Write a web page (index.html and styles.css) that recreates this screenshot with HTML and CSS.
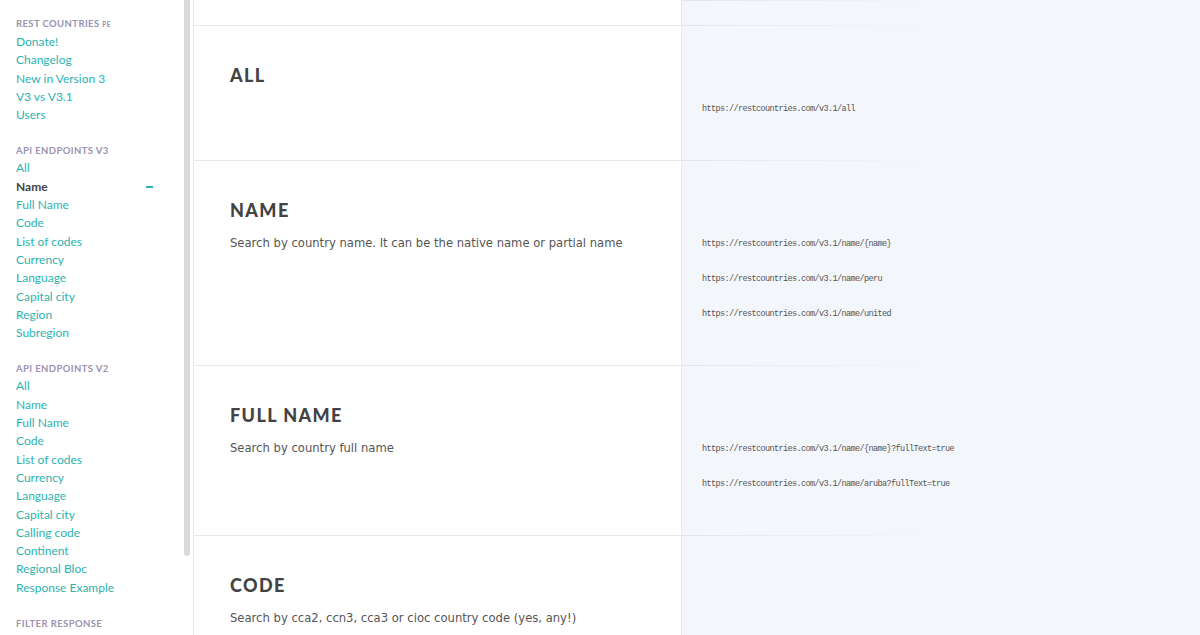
FILE: index.html
```html
<!DOCTYPE html>
<html lang="en">
<head>
  <meta charset="UTF-8">
  <meta name="viewport" content="width=device-width, initial-scale=1.0">
  <title>REST Countries</title>
  <link rel="stylesheet" href="styles.css">
</head>
<body>

<div class="page">
  <aside class="sidebar">
    <div class="sidebar-scroll">
      <div class="menu-group">
        <h4 class="menu-title">Rest Countries <small>pe</small></h4>
        <a href="#" class="menu-link">Donate!</a>
        <a href="#" class="menu-link">Changelog</a>
        <a href="#" class="menu-link">New in Version 3</a>
        <a href="#" class="menu-link">V3 vs V3.1</a>
        <a href="#" class="menu-link">Users</a>
      </div>

      <div class="menu-group">
        <h4 class="menu-title">API Endpoints V3</h4>
        <a href="#" class="menu-link">All</a>
        <a href="#" class="menu-link active">Name <span class="toggle"></span></a>
        <a href="#" class="menu-link">Full Name</a>
        <a href="#" class="menu-link">Code</a>
        <a href="#" class="menu-link">List of codes</a>
        <a href="#" class="menu-link">Currency</a>
        <a href="#" class="menu-link">Language</a>
        <a href="#" class="menu-link">Capital city</a>
        <a href="#" class="menu-link">Region</a>
        <a href="#" class="menu-link">Subregion</a>
      </div>

      <div class="menu-group">
        <h4 class="menu-title">API Endpoints V2</h4>
        <a href="#" class="menu-link">All</a>
        <a href="#" class="menu-link">Name</a>
        <a href="#" class="menu-link">Full Name</a>
        <a href="#" class="menu-link">Code</a>
        <a href="#" class="menu-link">List of codes</a>
        <a href="#" class="menu-link">Currency</a>
        <a href="#" class="menu-link">Language</a>
        <a href="#" class="menu-link">Capital city</a>
        <a href="#" class="menu-link">Calling code</a>
        <a href="#" class="menu-link">Continent</a>
        <a href="#" class="menu-link">Regional Bloc</a>
        <a href="#" class="menu-link">Response Example</a>
      </div>

      <div class="menu-group">
        <h4 class="menu-title">Filter Response</h4>
      </div>
    </div>
    <div class="scroll-thumb"></div>
  </aside>

  <main class="content">
    <div class="section section-tail">
      <div class="doc"></div>
      <div class="examples"></div>
    </div>

    <section class="section">
      <div class="doc">
        <h2>All</h2>
      </div>
      <div class="examples">
        <code>https://restcountries.com/v3.1/all</code>
      </div>
    </section>

    <section class="section">
      <div class="doc">
        <h2>Name</h2>
        <p>Search by country name. It can be the native name or partial name</p>
      </div>
      <div class="examples">
        <code>https://restcountries.com/v3.1/name/{name}</code>
        <code>https://restcountries.com/v3.1/name/peru</code>
        <code>https://restcountries.com/v3.1/name/united</code>
      </div>
    </section>

    <section class="section">
      <div class="doc">
        <h2>Full Name</h2>
        <p>Search by country full name</p>
      </div>
      <div class="examples">
        <code>https://restcountries.com/v3.1/name/{name}?fullText=true</code>
        <code>https://restcountries.com/v3.1/name/aruba?fullText=true</code>
      </div>
    </section>

    <section class="section">
      <div class="doc">
        <h2>Code</h2>
        <p>Search by cca2, ccn3, cca3 or cioc country code (yes, any!)</p>
      </div>
      <div class="examples"></div>
    </section>
  </main>
</div>

</body>
</html>
```

FILE: styles.css
```css
body {
  margin: 0;
  font-family: Lato, "Open Sans", Arial, sans-serif;
  background-color: #fff;
  height: 635px;
  overflow: hidden;
}

.page {
  display: flex;
  height: 635px;
  overflow: hidden;
}

/* sidebar */

.sidebar {
  position: relative;
  flex: 0 0 193px;
  border-right: 1px solid #e4e6ea;
  overflow: hidden;
}

.sidebar-scroll {
  padding: 16px 0 0 16px;
}

.menu-group {
  margin-bottom: 19px;
}

.menu-title {
  margin: 0;
  font-size: 9.5px;
  line-height: 16px;
  font-weight: 700;
  text-transform: uppercase;
  letter-spacing: 0.4px;
  color: #9a93b1;
}

.menu-title small {
  font-size: 6.5px;
}

.menu-link {
  display: flex;
  align-items: center;
  justify-content: space-between;
  width: 137px;
  font-size: 12px;
  line-height: 18.3px;
  color: #2db3b0;
  text-decoration: none;
}

.menu-link.active {
  color: #454545;
  font-weight: 700;
}

.toggle {
  width: 7px;
  height: 2px;
  background-color: #2db3b0;
}

.scroll-thumb {
  position: absolute;
  top: 0;
  right: 3px;
  width: 6px;
  height: 556px;
  background-color: #dadada;
  border-radius: 0 0 3px 3px;
}

/* content */

.content {
  flex: 1;
  overflow: hidden;
}

.section {
  display: grid;
  grid-template-columns: 487px 1fr;
}

.section-tail {
  height: 25px;
}

.doc {
  padding: 38px 36px 20px;
  border-top: 1px solid #e6e8ec;
}

.section-tail .doc,
.section-tail .examples {
  border-top: none;
  padding: 0;
}

.doc h2 {
  margin: 0;
  font-size: 18px;
  line-height: 22px;
  font-weight: 900;
  letter-spacing: 1.4px;
  text-transform: uppercase;
  color: #434343;
}

.doc p {
  margin: 12px 0 0;
  font-family: "DejaVu Sans", Verdana, sans-serif;
  font-size: 11.6px;
  line-height: 20px;
  color: #555;
}

.examples {
  display: flex;
  flex-direction: column;
  gap: 20px;
  padding: 77px 20px 43px;
  border-left: 1px solid #e6e8ec;
  background: linear-gradient(to right, #e3e6eb, rgba(243, 246, 250, 0) 260px) top left / 100% 1px no-repeat, #f3f6fa;
}

.examples code {
  font-family: "Liberation Mono", monospace;
  font-size: 8.5px;
  line-height: 15px;
  letter-spacing: -0.6px;
  color: #555;
}
```
